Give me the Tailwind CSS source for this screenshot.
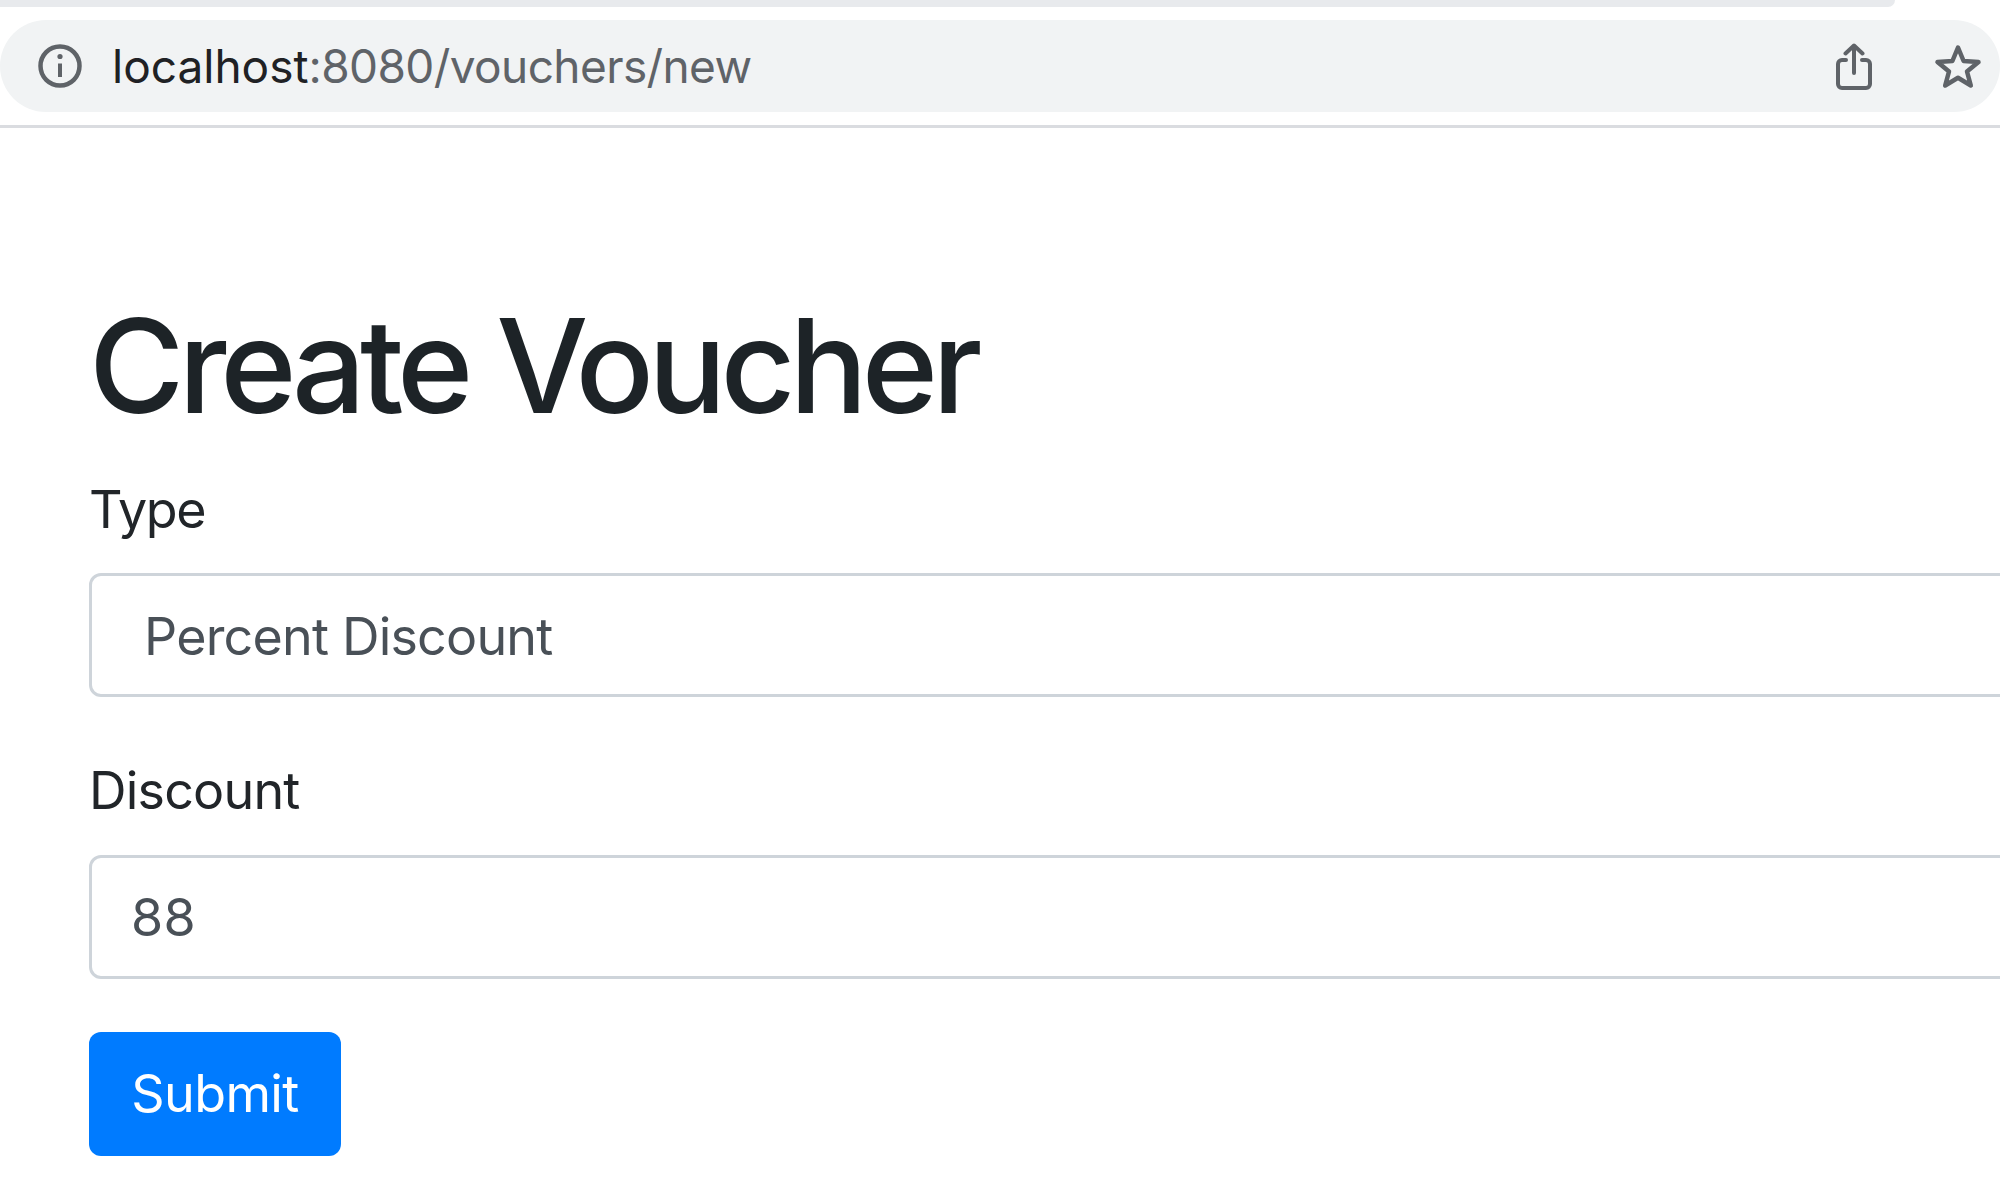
<!DOCTYPE html>
<html lang="en">
<head>
<meta charset="utf-8">
<title>Create Voucher</title>
<script src="https://cdn.jsdelivr.net/npm/@tailwindcss/browser@4"></script>
</head>
<body class="w-[2000px] h-[1201px] overflow-hidden bg-white font-['Inter','Liberation_Sans',sans-serif]">
  <header class="h-[128px] border-b-[3px] border-[#dadce0] relative">
    <div class="h-[7px] w-[1895px] bg-[#e8eaed] rounded-br-[14px]"></div>
    <div class="mt-[13px] h-[92px] bg-[#f1f3f4] rounded-[46px] flex items-center pl-[38px] pr-[18px]">
      <svg class="w-[44px] h-[44px] shrink-0" viewBox="0 0 44 44" fill="none" stroke="#5f6368" stroke-width="4.5" aria-hidden="true">
        <circle cx="22" cy="22" r="19.5"/>
        <path d="M22 19.5V33" stroke-width="4"/>
        <circle cx="22" cy="12.5" r="2.6" fill="#5f6368" stroke="none"/>
      </svg>
      <div class="ml-[30px] -mt-[1px] text-[46px] leading-[92px] text-[#5f6368] tracking-[-0.6px]"><span class="text-[#202124] tracking-normal">localhost</span>:8080/vouchers/new</div>
      <svg class="ml-auto w-[36px] h-[47px] shrink-0" viewBox="0 0 36 47" fill="none" stroke="#5f6368" stroke-width="4" stroke-linecap="round" stroke-linejoin="round" aria-hidden="true">
        <path d="M10 17H6a4 4 0 0 0-4 4v20a4 4 0 0 0 4 4h24a4 4 0 0 0 4-4V21a4 4 0 0 0-4-4h-4"/>
        <path d="M18 30V3M9.500 10.500 18 2.500l8.500 8"/>
      </svg>
      <svg class="ml-[62px] w-[48px] h-[46px] shrink-0" viewBox="0 0 48 46" fill="none" stroke="#5f6368" stroke-width="4.500" stroke-linejoin="round" aria-hidden="true">
        <path d="M24 4.500 29.600 18 44.500 19 33 28.500 36.800 42.500 24 34.800 11.200 42.500 15 28.500 3.500 19 18.400 18Z"/>
      </svg>
    </div>
  </header>
  <main class="pl-[89px] text-[52px] leading-[78px] text-[#212529]">
    <h1 class="mt-[160px] text-[130px] leading-[156px] font-medium text-[#1d2327] tracking-[-5.9px]">Create Voucher</h1>
    <form class="w-[2200px] mt-[27px] tracking-[-0.8px]">
      <label class="block mb-[24px] tracking-[-1.4px]">Type</label>
      <select class="block w-full h-[124px] border-[3px] border-[#ced4da] rounded-[12px] bg-white pl-[52px] pt-[3px] text-[#495057] appearance-none">
        <option>Percent Discount</option>
      </select>
      <label class="block mt-[55px] mb-[25px]">Discount</label>
      <input class="block w-full h-[124px] border-[3px] border-[#ced4da] rounded-[12px] bg-white pl-[39px] text-[#495057] tracking-[0.3px]" type="number" value="88">
      <button type="button" class="block mt-[53px] w-[252px] h-[124px] bg-[#007bff] rounded-[12px] text-white tracking-[-0.6px]">Submit</button>
    </form>
  </main>
</body>
</html>
